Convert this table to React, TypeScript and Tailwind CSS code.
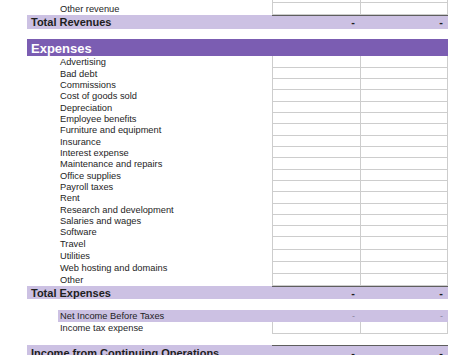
const expenseRows = [
  { label: "Advertising", h: "h-[12px]" },
  { label: "Bad debt", h: "h-[11px]" },
  { label: "Commissions", h: "h-[11px]" },
  { label: "Cost of goods sold", h: "h-[12px]" },
  { label: "Depreciation", h: "h-[11px]" },
  { label: "Employee benefits", h: "h-[11px]" },
  { label: "Furniture and equipment", h: "h-[12px]" },
  { label: "Insurance", h: "h-[11px]" },
  { label: "Interest expense", h: "h-[11px]" },
  { label: "Maintenance and repairs", h: "h-[12px]" },
  { label: "Office supplies", h: "h-[11px]" },
  { label: "Payroll taxes", h: "h-[11px]" },
  { label: "Rent", h: "h-[12px]" },
  { label: "Research and development", h: "h-[11px]" },
  { label: "Salaries and wages", h: "h-[11px]" },
  { label: "Software", h: "h-[11px]" },
  { label: "Travel", h: "h-[13px]" },
  { label: "Utilities", h: "h-[12px]" },
  { label: "Web hosting and domains", h: "h-[12px]" },
  { label: "Other", h: "h-[12px]" },
];

const row = "grid grid-cols-[245px_88px_88px]";

function ItemRow({ label, h }: { label: string; h: string }) {
  return (
    <div className={`${row} ${h}`}>
      <div className="flex items-center pl-[33px] pt-[2px] text-[9.3px] leading-none">{label}</div>
      <div className="border-l border-b border-[#cdcdcd]" />
      <div className="border-x border-b border-[#cdcdcd]" />
    </div>
  );
}

function TotalRow({ label, h }: { label: string; h: string }) {
  return (
    <div className={`${row} ${h} bg-[#ccc1e3]`}>
      <div className="flex items-center pl-[4px] pt-[1px] text-[11px] font-bold leading-none">{label}</div>
      <div className="flex items-center justify-end border-t border-[#5e5e5e] pr-[5px] text-[11px] font-bold leading-none">-</div>
      <div className="flex items-center justify-end border-t border-[#5e5e5e] pr-[5px] text-[11px] font-bold leading-none">-</div>
    </div>
  );
}

export default function App() {
  return (
    <div className="h-[355px] w-[474px] overflow-hidden bg-white font-['Liberation_Sans',Arial,sans-serif] text-[#1e1e1e]">
      <div className="-mt-[9px] ml-[27px] w-[421px]">
        <ItemRow label="Interest income" h="h-[12px]" />
        <ItemRow label="Other revenue" h="h-[12px]" />
        <TotalRow label="Total Revenues" h="h-[14px]" />
        <div className="h-[10px]" />

        <div className="flex h-[17px] items-center bg-[#7b5db2] pl-[4px] pt-[1px] text-[13px] font-bold leading-none text-white">
          Expenses
        </div>
        {expenseRows.map((item) => (
          <ItemRow key={item.label} label={item.label} h={item.h} />
        ))}
        <TotalRow label="Total Expenses" h="h-[13px]" />
        <div className="h-[11px]" />

        <div className={`${row} h-[12px]`}>
          <div className="ml-[31px] flex items-center bg-[#ccc1e3] pl-[2px] pt-[1px] text-[9.3px] leading-none">
            Net Income Before Taxes
          </div>
          <div className="flex items-center justify-end bg-[#ccc1e3] pr-[5px] text-[9px] leading-none text-[#8a82a0]">-</div>
          <div className="flex items-center justify-end bg-[#ccc1e3] pr-[5px] text-[9px] leading-none text-[#8a82a0]">-</div>
        </div>
        <ItemRow label="Income tax expense" h="h-[12px]" />
        <div className="h-[11px]" />

        <TotalRow label="Income from Continuing Operations" h="h-[15px]" />
      </div>
    </div>
  );
}
